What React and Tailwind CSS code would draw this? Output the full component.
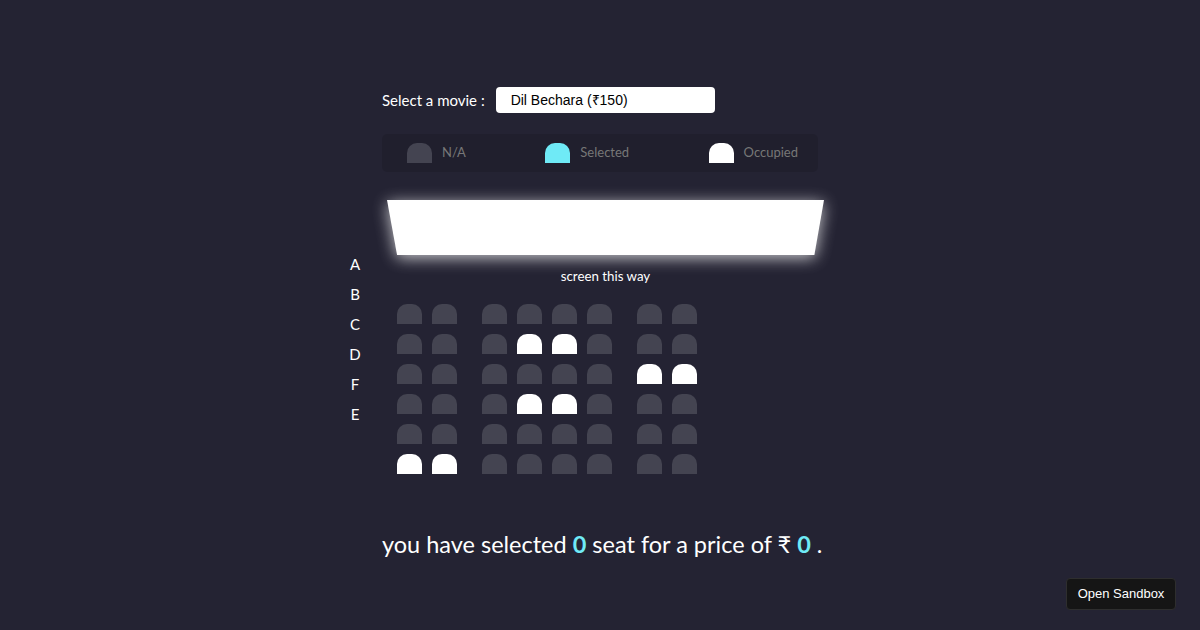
import React from "react";

const rows = [
  [0, 0, 0, 0, 0, 0, 0, 0],
  [0, 0, 0, 1, 1, 0, 0, 0],
  [0, 0, 0, 0, 0, 0, 1, 1],
  [0, 0, 0, 1, 1, 0, 0, 0],
  [0, 0, 0, 0, 0, 0, 0, 0],
  [1, 1, 0, 0, 0, 0, 0, 0],
];

const letters = ["A", "B", "C", "D", "F", "E"];

const Seat = ({ occupied, aisle }) => (
  <div
    className={`w-[25px] h-[20px] m-[5px] rounded-t-[10px] ${
      occupied ? "bg-white" : "bg-[#444451]"
    } ${aisle ? "mr-[20px]" : ""}`}
  />
);

export default function App() {
  return (
    <div className="relative min-h-screen w-full bg-[#242333] font-['Lato',sans-serif] text-white flex flex-col items-center pt-[87px]">
      <div className="w-[436px] flex items-center h-[26px]">
        <span className="text-[15px]">Select a movie :</span>
        <div className="ml-[11px] w-[219px] h-[26px] bg-white rounded-[4px] pl-[15px] flex items-center text-[14px] text-black font-['Liberation_Sans',sans-serif]">
          Dil Bechara (₹150)
        </div>
      </div>

      <div className="mt-[21px] w-[436px] h-[38px] bg-[rgba(0,0,0,0.1)] rounded-[5px] flex items-center justify-between pl-[25px] pr-[20px] text-[13px] text-[#777777]">
        <div className="flex items-center gap-[10px]">
          <div className="w-[25px] h-[20px] rounded-t-[10px] bg-[#444451]" />
          <span>N/A</span>
        </div>
        <div className="flex items-center gap-[10px]">
          <div className="w-[25px] h-[20px] rounded-t-[10px] bg-[#6feaf6]" />
          <span>Selected</span>
        </div>
        <div className="flex items-center gap-[10px]">
          <div className="w-[25px] h-[20px] rounded-t-[10px] bg-white" />
          <span>Occupied</span>
        </div>
      </div>

      <div className="mt-[28px] ml-[11px] w-[437px] h-[55px] drop-shadow-[0_3px_8px_rgba(255,255,255,0.75)]">
        <div className="w-full h-full bg-white [clip-path:polygon(0_0,100%_0,97.8%_100%,2.3%_100%)]" />
      </div>

      <div className="w-[436px] flex">
        <div className="-ml-[37px] w-[20px] shrink-0 -mt-[6px] flex flex-col text-[15px]">
          {letters.map((l) => (
            <div key={l} className="h-[30px] flex items-center justify-center">
              {l}
            </div>
          ))}
        </div>
        <div className="flex flex-col shrink-0">
          <div className="ml-[22px] w-[437px] mt-[12px] text-center text-[13.3px] leading-[18px]">
            screen this way
          </div>
          <div className="mt-[14px] ml-[27px] flex flex-col">
            {rows.map((r, i) => (
              <div key={i} className="flex">
                {r.map((s, j) => (
                  <Seat key={j} occupied={s === 1} aisle={j === 1 || j === 5} />
                ))}
              </div>
            ))}
          </div>
        </div>
      </div>

      <div className="w-[436px] mt-[50px] text-[23.5px] leading-[30px] whitespace-nowrap">
        you have selected <span className="text-[#6feaf6] font-bold">0</span> seat for a price of ₹{" "}
        <span className="text-[#6feaf6] font-bold">0</span> .
      </div>

      <div className="absolute right-[24px] bottom-[20px] w-[110px] h-[32px] bg-[#151515] border border-[#2e2e2e] rounded-[4px] flex items-center justify-center text-[13px] text-white font-['Liberation_Sans',sans-serif]">
        Open Sandbox
      </div>
    </div>
  );
}
